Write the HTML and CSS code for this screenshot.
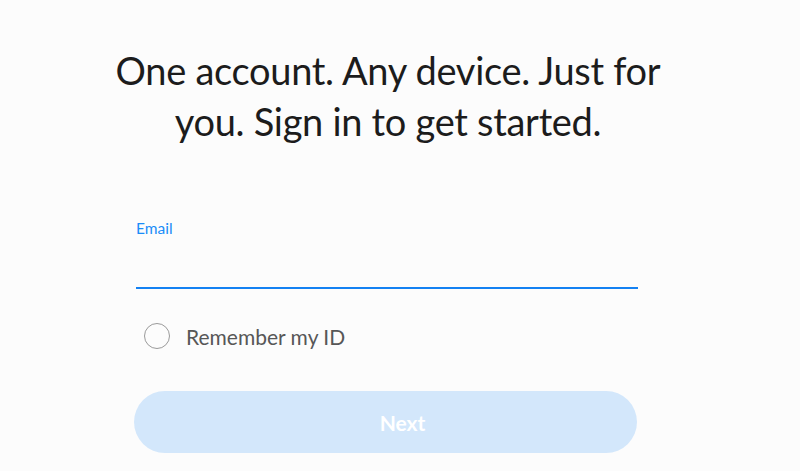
FILE: index.html
```html
<!DOCTYPE html>
<html lang="en">
<head>
<meta charset="utf-8">
<title>Sign in</title>
<link rel="stylesheet" href="styles.css">
</head>
<body>
<main class="page">
  <h1 class="title">One account. Any device. Just for you. Sign in to get started.</h1>
  <form class="form">
    <label class="field">
      <span class="field-label">Email</span>
      <input class="field-input" type="email">
    </label>
    <label class="remember">
      <span class="radio"></span>
      <span class="remember-text">Remember my ID</span>
    </label>
    <button class="next" type="button">Next</button>
  </form>
</main>
</body>
</html>
```
FILE: styles.css
```css
html, body {
  margin: 0;
  padding: 0;
  background: #fcfcfc;
}
body {
  font-family: "Lato", "Open Sans", sans-serif;
  color: #1f1f1f;
}
.page {
  width: 560px;
  margin-left: 108px;
  padding-top: 45px;
}
.title {
  margin: 0;
  font-size: 38px;
  font-weight: 400;
  line-height: 51px;
  letter-spacing: -0.3px;
  text-align: center;
  color: #1c1c1c;
}
.form {
  width: 504px;
  margin: 72px 0 0 26px;
  display: flex;
  flex-direction: column;
}
.field {
  display: flex;
  flex-direction: column;
}
.field-label {
  font-size: 15.5px;
  line-height: 18px;
  color: #1a8cf8;
  padding-left: 2px;
}
.field-input {
  margin: 0 0 0 2px;
  height: 50px;
  border: 0;
  border-bottom: 2px solid #1481f2;
  background: transparent;
  outline: none;
  padding: 0;
  font: inherit;
}
.remember {
  display: flex;
  align-items: center;
  margin-top: 33px;
  padding-left: 10px;
  height: 28px;
}
.radio {
  width: 24px;
  height: 24px;
  border: 1.6px solid #9a9a9a;
  border-radius: 50%;
  flex: none;
}
.remember-text {
  margin-left: 16px;
  font-size: 21px;
  color: #575757;
}
.next {
  margin-top: 41px;
  height: 62px;
  width: 503px;
  border: 0;
  border-radius: 31px;
  background: #d3e7fb;
  color: #ffffff;
  font-family: "Lato", "Open Sans", sans-serif;
  font-size: 21px;
  font-weight: 700;
  padding: 0 0 0 34px;
  cursor: default;
}
```
